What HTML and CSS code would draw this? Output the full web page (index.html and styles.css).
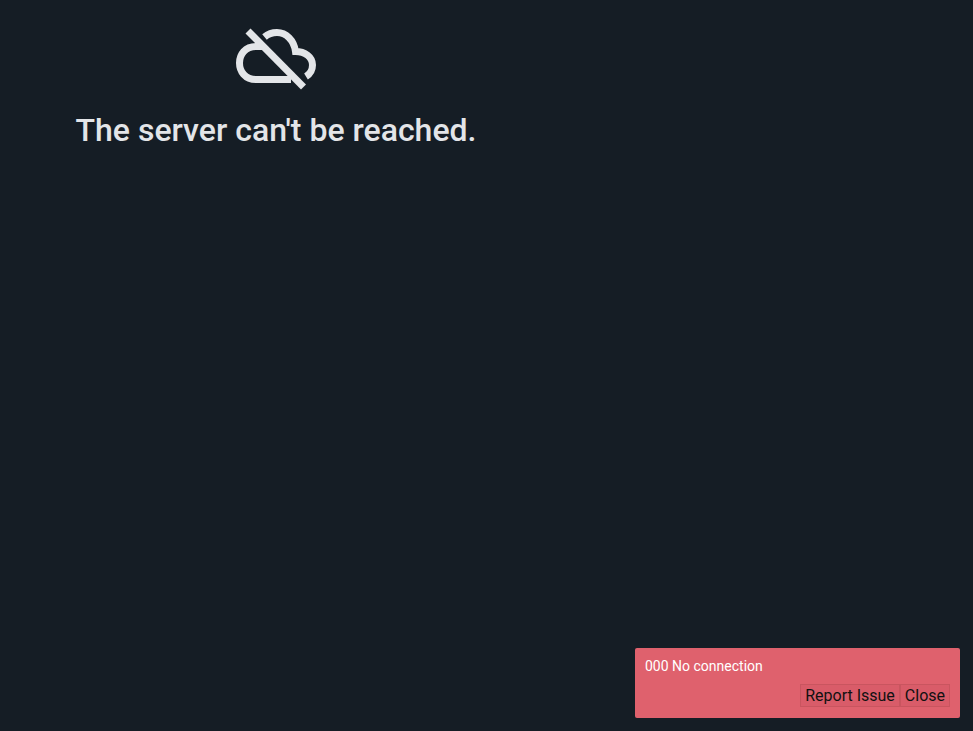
FILE: index.html
```html
<!DOCTYPE html>
<html lang="en">
<head>
    <meta charset="UTF-8">
    <meta name="viewport" content="width=device-width, initial-scale=1.0">
    <title>The server can't be reached</title>
    <link rel="stylesheet" href="styles.css">
</head>
<body>
    <div class="offline">
        <svg class="offline-icon" width="96" height="72" viewBox="228 22 96 72" fill="none" stroke="#e3e5e8" stroke-width="7">
            <path d="M262 46.5H256C234 46.5 234 79.5 256 79.5H291"/>
            <path d="M264.5 37C268 34 272 32.5 277 32.5C286 32.5 294 40 295.5 51.5C305 51.5 312.5 57 312.5 65C312.5 70 310 74 306 76.5"/>
            <path d="M248 31L303.5 87"/>
        </svg>
        <h1 class="offline-title">The server can't be reached.</h1>
    </div>

    <div class="toast">
        <div class="toast-message">000 No connection</div>
        <div class="toast-actions">
            <button class="toast-btn">Report Issue</button>
            <button class="toast-btn">Close</button>
        </div>
    </div>
</body>
</html>
```

FILE: styles.css
```css
* {
    margin: 0;
    padding: 0;
    box-sizing: border-box;
}

body {
    font-family: Roboto, 'Liberation Sans', sans-serif;
    background: #151d25;
    color: #e3e5e8;
    height: 100vh;
    overflow: hidden;
}

.offline {
    width: 400px;
    margin-left: 76px;
    padding-top: 22px;
    display: flex;
    flex-direction: column;
    align-items: center;
}

.offline-icon {
    display: block;
}

.offline-title {
    font-size: 32px;
    line-height: 38px;
    font-weight: 500;
    white-space: nowrap;
    margin-top: 17px;
}

.toast {
    position: fixed;
    right: 13px;
    bottom: 13px;
    width: 325px;
    height: 70px;
    padding: 10px;
    background: #df616d;
    border-radius: 2px;
    color: #fff;
}

.toast-message {
    font-size: 14px;
    line-height: 17px;
}

.toast-actions {
    display: flex;
    justify-content: flex-end;
    margin-top: 9px;
}

.toast-btn {
    font-family: inherit;
    font-size: 16px;
    line-height: 21px;
    color: #111;
    background: #d95c69;
    border: 1px solid #c9555f;
    padding: 0 4px;
    height: 23px;
}
```
